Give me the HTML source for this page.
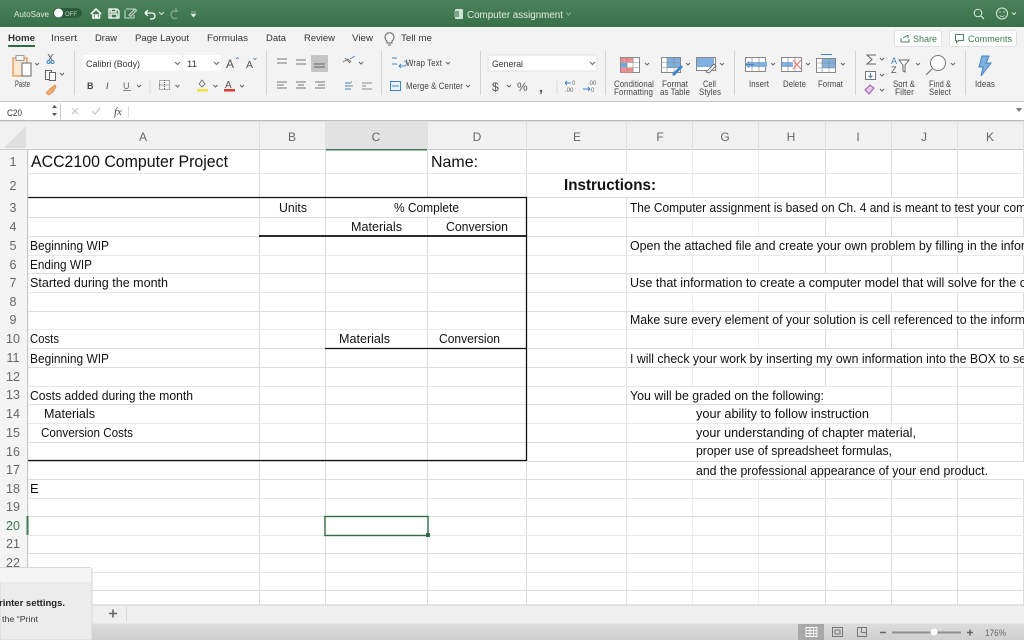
<!DOCTYPE html>
<html><head><meta charset="utf-8"><style>
html,body{margin:0;padding:0;background:#fff;width:1024px;height:640px;overflow:hidden}
svg{position:absolute;left:0;top:0;display:block}
text{font-family:"Liberation Sans",sans-serif}
.r{font-size:9px;fill:#444;letter-spacing:.1px}
.t{font-size:9.5px;fill:#333}
.c{font-size:13px;fill:#111}
.h{font-size:12px;fill:#666;text-anchor:middle}
.n{font-size:12.5px;fill:#666;text-anchor:middle}
.chev{fill:none;stroke:#666;stroke-width:1}
</style></head><body>
<svg width="1024" height="640" viewBox="0 0 1024 640" xmlns="http://www.w3.org/2000/svg">
<defs>
<linearGradient id="g" x1="0" y1="0" x2="0" y2="1"><stop offset="0" stop-color="#4c8259"/><stop offset="1" stop-color="#38714a"/></linearGradient>
<linearGradient id="s" x1="0" y1="0" x2="0" y2="1"><stop offset="0" stop-color="#dcdcdc"/><stop offset="1" stop-color="#cfcfcf"/></linearGradient>
</defs>
<rect width="1024" height="640" fill="#fff"/>

<!-- title bar -->
<rect width="1024" height="27" fill="url(#g)"/>
<text x="14" y="17" font-size="8.5" fill="#dfe9e2" textLength="35" lengthAdjust="spacingAndGlyphs">AutoSave</text>
<rect x="53" y="8" width="29" height="10" rx="5" fill="#2c5b3a"/><circle cx="58.5" cy="13" r="4.5" fill="#fff"/>
<text x="65" y="16" font-size="6" fill="#b9cfc0" textLength="12" lengthAdjust="spacingAndGlyphs">OFF</text>
<path d="M91 14l5-5 5 5M93 14v4h2.5v-3h1.5v3h2.500v-4" fill="none" stroke="#fff" stroke-width="1.6"/>
<path d="M109 9h8l2 2v7h-10zM111 9v3h5V9M111 18v-4h6v4" fill="none" stroke="#fff" stroke-width="1.3"/>
<path d="M126 9h8v2M125 10v8h9v-3M129 15l6-6 1.5 1.5-6 6z" fill="none" stroke="#c7d8cc" stroke-width="1.1"/>
<path d="M145 13h7a3 3 0 0 1 0 6h-2M145 13l3-3M145 13l3 3" fill="none" stroke="#fff" stroke-width="1.3"/>
<path d="M159 12l2.5 2.5 2.5-2.500" fill="none" stroke="#d5e2d9" stroke-width="1"/>
<path d="M178 11h-5a4 4 0 1 0 4 7M176 8v4" fill="none" stroke="#7fa68a" stroke-width="1.4"/>
<path d="M191 12h5M191 14l2.5 3 2.5-3z" fill="#dfe9e2" stroke="#dfe9e2" stroke-width=".6"/>
<rect x="455" y="9" width="8" height="10" rx="1" fill="#cfe0d4"/><rect x="454" y="11" width="5" height="6" fill="#7aa487"/>
<text x="467" y="18" font-size="10" fill="#e4ece6" textLength="96" lengthAdjust="spacingAndGlyphs">Computer assignment</text>
<path d="M566 12.5l2.5 2.5 2.5-2.500" fill="none" stroke="#8db198" stroke-width="1"/>
<circle cx="978" cy="13" r="3.8" fill="none" stroke="#dfe9e2" stroke-width="1"/><path d="M981 16l3 3" stroke="#dfe9e2" stroke-width="1.2"/>
<circle cx="1002" cy="13.5" r="5.5" fill="none" stroke="#dfe9e2" stroke-width="1"/><circle cx="1000" cy="12" r=".7" fill="#dfe9e2"/><circle cx="1004" cy="12" r=".7" fill="#dfe9e2"/><path d="M999.5 15.5q2.5 2 5 0" fill="none" stroke="#dfe9e2" stroke-width=".8"/>
<path d="M1012 12.5l2 2 2-2" fill="none" stroke="#dfe9e2" stroke-width="1"/>

<!-- ribbon -->
<rect y="27" width="1024" height="75" fill="#f3f3f3"/>
<rect y="101" width="1024" height="1.5" fill="#c8c8c8"/>
<g class="t">
<text x="8" y="41" font-weight="bold" fill="#333" textLength="27" lengthAdjust="spacingAndGlyphs">Home</text>
<text x="51" y="41" textLength="26" lengthAdjust="spacingAndGlyphs">Insert</text>
<text x="95" y="41" textLength="22" lengthAdjust="spacingAndGlyphs">Draw</text>
<text x="135" y="41" textLength="54" lengthAdjust="spacingAndGlyphs">Page Layout</text>
<text x="207" y="41" textLength="41" lengthAdjust="spacingAndGlyphs">Formulas</text>
<text x="266" y="41" textLength="20" lengthAdjust="spacingAndGlyphs">Data</text>
<text x="304" y="41" textLength="31" lengthAdjust="spacingAndGlyphs">Review</text>
<text x="352" y="41" textLength="21" lengthAdjust="spacingAndGlyphs">View</text>
<text x="401" y="41" textLength="31" lengthAdjust="spacingAndGlyphs">Tell me</text>
</g>
<rect x="8" y="45" width="27" height="2" fill="#2f6b45"/>
<path d="M387 41a4.5 4.5 0 1 1 5 0v2h-5zM388 45h3" fill="none" stroke="#666" stroke-width="1"/>

<!-- share/comments -->
<rect x="894.5" y="30.5" width="47" height="16" rx="2" fill="#fff" stroke="#e0e0e0"/>
<path d="M901 42v-4M901 42h8v-3M903 38l5-3M908 35v3" fill="none" stroke="#4f7f5d" stroke-width="1"/>
<text x="913" y="42" font-size="9" fill="#3c7a50" textLength="24" lengthAdjust="spacingAndGlyphs">Share</text>
<rect x="949.5" y="30.5" width="67" height="16" rx="2" fill="#fff" stroke="#e0e0e0"/>
<path d="M955.5 34.5h8v6h-5l-2 2v-2h-1z" fill="none" stroke="#4f7f5d" stroke-width="1"/>
<text x="968" y="42" font-size="9" fill="#3c7a50" textLength="44" lengthAdjust="spacingAndGlyphs">Comments</text>

<!-- separators -->
<g stroke="#d3d3d3"><path d="M74.5 51v44M266.5 51v44M381.5 51v44M480.5 51v44M605.5 51v44M734.5 51v44M855.5 51v44M965.5 51v44"/></g>

<!-- clipboard -->
<path d="M13 58h14v18H13z" fill="#fbe7d3" stroke="#e79a4e" stroke-width="1.3"/><rect x="16" y="55.5" width="8" height="5" fill="#f4f4f4" stroke="#888" stroke-width=".8"/>
<rect x="22" y="63" width="9" height="13" fill="#fff" stroke="#666"/>
<path d="M35 63l2 2 2-2" class="chev"/>
<text x="15" y="87" class="r" textLength="15" lengthAdjust="spacingAndGlyphs">Paste</text>
<path d="M48 54l4 6M53 54l-4 6" stroke="#666" fill="none"/><circle cx="48.5" cy="62" r="1.5" fill="none" stroke="#3e84c6"/><circle cx="52.5" cy="62" r="1.5" fill="none" stroke="#3e84c6"/>
<rect x="45.5" y="70.5" width="6" height="9" fill="none" stroke="#666"/><rect x="49.5" y="72.5" width="6" height="8" fill="#fff" stroke="#666"/>
<path d="M60 73l2 2 2-2" class="chev"/>
<path d="M46 93l5-5 3 3-5 4zM51 88l4-3 1 2-2 3" fill="#f0b27a" stroke="#d9883f" stroke-width=".8"/>

<!-- font -->
<rect x="83" y="55" width="98" height="16" rx="2" fill="#fff"/>
<text x="86" y="67" font-size="9.5" fill="#333" textLength="54" lengthAdjust="spacingAndGlyphs">Calibri (Body)</text>
<path d="M175 62l2.5 2.5 2.5-2.500" class="chev"/>
<rect x="183" y="55" width="38" height="16" rx="2" fill="#fff"/>
<text x="187" y="67" font-size="9.5" fill="#333">11</text>
<path d="M214 62l2.5 2.5 2.5-2.500" class="chev"/>
<text x="226" y="68" font-size="12" fill="#555">A</text><path d="M236 59l1.5-1.500 1.5 1.5" fill="none" stroke="#3e84c6" stroke-width=".8"/>
<text x="246" y="68" font-size="10.5" fill="#555">A</text><path d="M253.5 58l1.5 1.5 1.5-1.500" fill="none" stroke="#3e84c6" stroke-width=".8"/>
<text x="87" y="89" font-size="9" font-weight="bold" fill="#444">B</text>
<text x="106" y="89" font-size="9" font-style="italic" fill="#444">I</text>
<text x="123" y="89" font-size="9" fill="#666">U</text><path d="M123 90.5h8" stroke="#888"/>
<path d="M137 85l2 2 2-2" class="chev"/>
<path d="M150 80v14" stroke="#ddd"/>
<rect x="159.5" y="80.5" width="10" height="9" fill="none" stroke="#666" stroke-dasharray="1 1"/><path d="M159.5 85h10M164.5 80v9" stroke="#666" stroke-dasharray="1 1"/>
<path d="M175.5 85l2 2 2-2" class="chev"/>
<path d="M199 84l3-4 3 4-3 3z" fill="#eee" stroke="#666" stroke-width=".8"/><rect x="197" y="89" width="11" height="2.5" fill="#f4e33c"/>
<path d="M213.5 85l2 2 2-2" class="chev"/>
<text x="225" y="88" font-size="10" fill="#555">A</text><rect x="224" y="89" width="11" height="2.5" fill="#e23b36"/>
<path d="M240 85l2 2 2-2" class="chev"/>

<!-- align -->
<path d="M277 59h10M277 63h10M296 60h10M296 64h10" stroke="#777"/>
<rect x="311" y="55" width="17" height="17" rx="1" fill="#c4c4c4"/><path d="M314 64h11M314 67h11" stroke="#666"/>
<path d="M277 82h10M277 85h7M277 88h10M296 82h10M298 85h6M296 88h10M315 82h10M318 85h7M315 88h10" stroke="#777"/>
<path d="M345 58l5 5M343 62l5-3 3 3" fill="none" stroke="#777"/><path d="M350 59l5-3" stroke="#3e84c6"/>
<path d="M359 62l2 2 2-2" class="chev"/>
<path d="M345 83h6M345 89h6M348 86h-3" stroke="#3e84c6"/><path d="M352 82h-1M348 86h5" stroke="#888"/>
<path d="M362 83h10M362 89h10M362 86h4" stroke="#888"/><path d="M364 86h1" stroke="#3e84c6"/>

<!-- wrap -->
<path d="M392 58h5M392 64h5M399 66h5a2 2 0 0 0 0-5M399 66l2-2M399 66l2 2" fill="none" stroke="#3e84c6" stroke-width=".9"/>
<text x="406" y="66" class="r" textLength="36" lengthAdjust="spacingAndGlyphs">Wrap Text</text>
<path d="M446 62l2 2 2-2" class="chev"/>
<rect x="390.5" y="81.5" width="10" height="9" fill="#eaf2fa" stroke="#3e84c6"/><path d="M392 86h7" stroke="#3e84c6"/>
<text x="406" y="89" class="r" textLength="57" lengthAdjust="spacingAndGlyphs">Merge &amp; Center</text>
<path d="M466 85l2 2 2-2" class="chev"/>

<!-- number -->
<rect x="488" y="55" width="109" height="16" rx="2" fill="#fff" stroke="#e2e2e2"/>
<text x="492" y="67" font-size="9.5" fill="#333" textLength="31" lengthAdjust="spacingAndGlyphs">General</text>
<path d="M590 62l2.5 2.5 2.5-2.500" class="chev"/>
<text x="492" y="91" font-size="12" fill="#555">$</text>
<path d="M507 85l2 2 2-2" class="chev"/>
<text x="517" y="91" font-size="12" fill="#555">%</text>
<text x="539" y="92" font-size="14" font-weight="bold" fill="#555">,</text>
<path d="M557 80v14" stroke="#ddd"/>
<path d="M565 83h6M565 83l2-2M565 83l2 2" fill="none" stroke="#3e84c6" stroke-width=".9"/><text x="565" y="92" font-size="6" fill="#666">.00</text><text x="572" y="85" font-size="6" fill="#666">0</text>
<path d="M583 89h7M590 89l-2-2M590 89l-2 2" fill="none" stroke="#3e84c6" stroke-width=".9"/><text x="588" y="85" font-size="6" fill="#666">.00</text><text x="591" y="92" font-size="6" fill="#666">0</text>

<!-- conditional formatting -->
<rect x="620.5" y="57.5" width="19" height="15" fill="#fff" stroke="#888"/>
<rect x="621" y="58" width="12" height="4.5" fill="#ef8f8f"/><rect x="621" y="63" width="6" height="4.5" fill="#6ea9dd"/><rect x="621" y="68" width="12" height="4.5" fill="#ef8f8f"/>
<path d="M627 58v14M633 58v14M621 62.5h18M621 67.5h18" stroke="#888" stroke-width=".6"/>
<path d="M645 63l2 2 2-2" class="chev"/>
<text x="614" y="87" class="r" textLength="40" lengthAdjust="spacingAndGlyphs">Conditional</text>
<text x="614" y="95" class="r" textLength="39" lengthAdjust="spacingAndGlyphs">Formatting</text>
<!-- format table -->
<rect x="661.5" y="57.5" width="19" height="15" fill="#fff" stroke="#888"/><rect x="667" y="58" width="13" height="10" fill="#7fb0e0"/><path d="M667 58v14M674 58v14M662 62.5h18M662 67.5h18" stroke="#888" stroke-width=".6"/>
<path d="M672 74l9-9 2 2-9 9z" fill="#3e84c6"/>
<path d="M686 63l2 2 2-2" class="chev"/>
<text x="662" y="87" class="r" textLength="26" lengthAdjust="spacingAndGlyphs">Format</text>
<text x="660" y="95" class="r" textLength="30" lengthAdjust="spacingAndGlyphs">as Table</text>
<!-- cell styles -->
<rect x="696.5" y="57.5" width="19" height="13" fill="#fff" stroke="#888"/><rect x="697" y="58" width="17" height="9" fill="#7fb0e0"/>
<path d="M706 72l8-8 2 2-7 7z" fill="#eee" stroke="#666" stroke-width=".8"/>
<path d="M720 63l2 2 2-2" class="chev"/>
<text x="703" y="87" class="r" textLength="13" lengthAdjust="spacingAndGlyphs">Cell</text>
<text x="699" y="95" class="r" textLength="22" lengthAdjust="spacingAndGlyphs">Styles</text>

<!-- insert / delete / format -->
<rect x="745.5" y="57.5" width="20" height="14" fill="#fff" stroke="#888"/><rect x="748" y="62" width="19" height="5" fill="#7fb0e0"/><path d="M752 58v14M759 58v14" stroke="#888" stroke-width=".7"/><path d="M746 64.5h8M746 64.5l3-3M746 64.5l3 3" fill="none" stroke="#3e84c6"/>
<path d="M771 63l2 2 2-2" class="chev"/>
<text x="749" y="87" class="r" textLength="20" lengthAdjust="spacingAndGlyphs">Insert</text>
<rect x="781.5" y="57.5" width="20" height="14" fill="#fff" stroke="#888"/><rect x="782" y="62" width="11" height="5" fill="#7fb0e0"/><path d="M788 58v14M795 58v14" stroke="#888" stroke-width=".7"/><path d="M793 60l8 9M801 60l-8 9" stroke="#e77" stroke-width="1.2"/>
<path d="M806 63l2 2 2-2" class="chev"/>
<text x="783" y="87" class="r" textLength="23" lengthAdjust="spacingAndGlyphs">Delete</text>
<rect x="816.5" y="58.5" width="19" height="14" fill="#fff" stroke="#888"/><rect x="822" y="59" width="13" height="9" fill="#7fb0e0"/><path d="M822 58v14M829 58v14M817 63h18M817 68h18" stroke="#888" stroke-width=".6"/><path d="M821 54.5h11" stroke="#3e84c6"/>
<path d="M841 63l2 2 2-2" class="chev"/>
<text x="818" y="87" class="r" textLength="25" lengthAdjust="spacingAndGlyphs">Format</text>

<!-- editing -->
<path d="M876 55h-9l5 4.5-5 4.5h9" fill="none" stroke="#666"/><path d="M880 58l2 2 2-2" class="chev"/>
<rect x="865.5" y="71.5" width="10" height="8" fill="#fff" stroke="#777"/><path d="M870.5 73v4M868.5 75.5l2 2 2-2" fill="none" stroke="#3e84c6"/><path d="M880 74l2 2 2-2" class="chev"/>
<path d="M865 90l5-5 4 3-5 6z" fill="#e6c8ee" stroke="#9a5fb4"/><path d="M880 89l2 2 2-2" class="chev"/>
<text x="891" y="64" font-size="9" fill="#3e84c6">A</text><text x="891" y="73" font-size="9" fill="#555">Z</text>
<path d="M899 60h10l-4 5v7l-2-1v-6z" fill="#fff" stroke="#666"/>
<path d="M916 63l2 2 2-2" class="chev"/>
<text x="893" y="87" class="r" textLength="22" lengthAdjust="spacingAndGlyphs">Sort &amp;</text>
<text x="895" y="95" class="r" textLength="19" lengthAdjust="spacingAndGlyphs">Filter</text>
<circle cx="938" cy="63" r="7.5" fill="#fff" stroke="#777"/><path d="M932 69l-6 6" stroke="#777" stroke-width="1.2"/>
<path d="M951 63l2 2 2-2" class="chev"/>
<text x="929" y="87" class="r" textLength="22" lengthAdjust="spacingAndGlyphs">Find &amp;</text>
<text x="929" y="95" class="r" textLength="22" lengthAdjust="spacingAndGlyphs">Select</text>
<path d="M982 56h7l-3 7h5l-10 13 2-9h-4z" fill="#7fb0e0" stroke="#3e84c6"/>
<text x="975" y="87" class="r" textLength="20" lengthAdjust="spacingAndGlyphs">Ideas</text>

<!-- formula bar -->
<rect y="102" width="1024" height="19" fill="#fff"/>
<rect y="120" width="1024" height="1.5" fill="#bdbdbd"/>
<path d="M60.5 103v17" stroke="#ccc"/>
<text x="7" y="116" font-size="9" fill="#333" textLength="15" lengthAdjust="spacingAndGlyphs">C20</text>
<path d="M52 108l2.5-3 2.5 3zM52 113l2.5 3 2.5-3z" fill="#555"/>
<path d="M72 108l6 6M78 108l-6 6M92 111l3 3 5-6" fill="none" stroke="#c4c4c4" stroke-width="1.2"/>
<text x="114" y="115" font-size="11" font-style="italic" style="font-family:'Liberation Serif',serif" fill="#444">fx</text>
<path d="M128.5 106v11" stroke="#ddd"/>
<path d="M1016 108h6l-3 4z" fill="#777"/>

<!-- headers -->
<rect y="122" width="1024" height="28" fill="#f1f1f1"/>
<rect x="325" y="122" width="103" height="27" fill="#e2e2e2"/>
<rect y="149" width="1024" height="1" fill="#c9c9c9"/>
<rect x="325" y="149" width="103" height="1.5" fill="#3c7a50"/>
<path d="M4 148L26 126v22z" fill="#dedede"/>
<g stroke="#e0e0e0"><path d="M259.5 122v28M325.5 122v28M427.5 122v28M526.5 122v28M626.5 122v28M692.5 122v28M758.5 122v28M825.5 122v28M891.5 122v28M957.5 122v28M1023.5 122v28"/></g>
<text class="h" x="143" y="141">A</text><text class="h" x="292" y="141">B</text><text class="h" x="376" y="141">C</text><text class="h" x="477" y="141">D</text><text class="h" x="577" y="141">E</text><text class="h" x="660" y="141">F</text><text class="h" x="725" y="141">G</text><text class="h" x="791" y="141">H</text><text class="h" x="858" y="141">I</text><text class="h" x="924" y="141">J</text><text class="h" x="990" y="141">K</text>

<!-- row header -->
<rect y="150" width="28" height="455" fill="#f4f4f4"/>
<g class="n">
<text x="13" y="166">1</text><text x="13" y="190">2</text><text x="13" y="212">3</text><text x="13" y="231">4</text><text x="13" y="250">5</text><text x="13" y="269">6</text><text x="13" y="287">7</text><text x="13" y="306">8</text><text x="13" y="324">9</text><text x="13" y="343">10</text><text x="13" y="362">11</text><text x="13" y="381">12</text><text x="13" y="399">13</text><text x="13" y="418">14</text><text x="13" y="437">15</text><text x="13" y="456">16</text><text x="13" y="474">17</text><text x="13" y="493">18</text><text x="13" y="511">19</text><text x="13" y="530" style="fill:#3c7a50">20</text><text x="13" y="548">21</text><text x="13" y="567">22</text>
</g>

<!-- gridlines -->
<g stroke="#dcdcdc" stroke-width="1">
<path d="M259.5 150v455M325.5 150v455M427.5 150v455M526.5 150v455M825.5 150v455M891.5 150v455M957.5 150v455M1023.5 150v455"/>
<path d="M626.5 150v455" stroke="#e2e2e2"/>
<path d="M692.5 150v455M758.5 150v455" stroke="#eeeeee"/>
<path d="M28 197.5H1024M28 217.5H1024M28 236.5H1024M28 273.5H1024M28 311.5H1024M28 348.5H1024M28 367.5H1024M28 404.5H1024M28 442.5H1024M28 461.5H1024M28 479.5H1024M28 516.5H1024M28 553.5H1024M28 590.5H1024"/>
<path d="M28 173.5H1024M28 255.5H1024M28 292.5H1024M28 329.5H1024M28 386.5H1024M28 423.5H1024M28 498.5H1024M28 535.5H1024M28 572.5H1024" stroke="#e8e8e8"/>
</g>
<!-- overflow cover -->
<g fill="#fff">
<rect x="528" y="174" width="130" height="23"/>
<rect x="327" y="198" width="199" height="19"/>
<rect x="628" y="198" width="396" height="19"/>
<rect x="628" y="237" width="396" height="18"/>
<rect x="628" y="274" width="396" height="18"/>
<rect x="628" y="312" width="396" height="17"/>
<rect x="628" y="349" width="396" height="18"/>
<rect x="628" y="387" width="263" height="17"/>
<rect x="628" y="405" width="263" height="18"/>
<rect x="628" y="424" width="329" height="18"/>
<rect x="628" y="443" width="329" height="18"/>
<rect x="628" y="462" width="396" height="17"/>
</g>

<!-- borders -->
<g stroke="#111" fill="none">
<path d="M28 197.5H526.5V461M28 460.5H526.5" stroke-width="1.3"/>
<path d="M259 236H526" stroke-width="1.7"/>
<path d="M325 348.5H526" stroke-width="1.2"/>
</g>
<rect x="27" y="150" width="1.2" height="455" fill="#c9c9c9"/>
<rect x="26.5" y="516" width="2" height="19" fill="#3c7a50"/>

<!-- cell text -->
<text x="31" y="167" font-size="16.5" fill="#111" textLength="197" lengthAdjust="spacingAndGlyphs">ACC2100 Computer Project</text>
<text x="431" y="167" font-size="16" fill="#111" textLength="47" lengthAdjust="spacingAndGlyphs">Name:</text>
<text x="564" y="190" font-size="16" font-weight="bold" fill="#111" textLength="92" lengthAdjust="spacingAndGlyphs">Instructions:</text>
<g class="c">
<text x="279" y="212" textLength="28" lengthAdjust="spacingAndGlyphs">Units</text>
<text x="394" y="212" textLength="65" lengthAdjust="spacingAndGlyphs">% Complete</text>
<text x="351" y="231" textLength="51" lengthAdjust="spacingAndGlyphs">Materials</text>
<text x="446" y="231" textLength="62" lengthAdjust="spacingAndGlyphs">Conversion</text>
<text x="30" y="250" textLength="79" lengthAdjust="spacingAndGlyphs">Beginning WIP</text>
<text x="30" y="269" textLength="62" lengthAdjust="spacingAndGlyphs">Ending WIP</text>
<text x="30" y="287" textLength="138" lengthAdjust="spacingAndGlyphs">Started during the month</text>
<text x="30" y="343" textLength="29" lengthAdjust="spacingAndGlyphs">Costs</text>
<text x="339" y="343" textLength="51" lengthAdjust="spacingAndGlyphs">Materials</text>
<text x="439" y="343" textLength="61" lengthAdjust="spacingAndGlyphs">Conversion</text>
<text x="30" y="363" textLength="79" lengthAdjust="spacingAndGlyphs">Beginning WIP</text>
<text x="30" y="400" textLength="163" lengthAdjust="spacingAndGlyphs">Costs added during the month</text>
<text x="44" y="418" textLength="51" lengthAdjust="spacingAndGlyphs">Materials</text>
<text x="41" y="437" textLength="92" lengthAdjust="spacingAndGlyphs">Conversion Costs</text>
<text x="30" y="493">E</text>
<text x="630" y="212" textLength="396" lengthAdjust="spacingAndGlyphs">The Computer assignment is based on Ch. 4 and is meant to test your com</text>
<text x="630" y="250" textLength="395" lengthAdjust="spacingAndGlyphs">Open the attached file and create your own problem by filling in the infor</text>
<text x="630" y="287" textLength="396" lengthAdjust="spacingAndGlyphs">Use that information to create  a computer model that will solve for the c</text>
<text x="630" y="324" textLength="395" lengthAdjust="spacingAndGlyphs">Make sure every element of your solution is cell referenced to the inform</text>
<text x="630" y="363" textLength="396" lengthAdjust="spacingAndGlyphs">I will check your work by inserting my own information into the BOX to se</text>
<text x="630" y="400" textLength="194" lengthAdjust="spacingAndGlyphs">You will be graded on the following:</text>
<text x="696" y="418" textLength="173" lengthAdjust="spacingAndGlyphs">your ability to follow instruction</text>
<text x="696" y="437" textLength="220" lengthAdjust="spacingAndGlyphs">your understanding of  chapter material,</text>
<text x="696" y="455" textLength="196" lengthAdjust="spacingAndGlyphs">proper use of spreadsheet formulas,</text>
<text x="696" y="475" textLength="292" lengthAdjust="spacingAndGlyphs">and the professional appearance of your end product.</text>
</g>

<!-- selection -->
<rect x="325" y="516.500" width="103" height="19" fill="#fff" stroke="#2f6b45" stroke-width="1.4"/>
<rect x="426" y="533" width="4" height="4" fill="#2f6b45"/>

<!-- tab bar & status -->
<rect y="605" width="1024" height="19" fill="#efefef"/>
<rect y="604.5" width="1024" height="1" fill="#cfcfcf"/>
<rect y="623.5" width="1024" height="16.5" fill="url(#s)"/>
<path d="M126.5 606v15" stroke="#d5d5d5"/>
<path d="M109 613.5h8M113 609.5v8" stroke="#666" stroke-width="1.6"/>

<rect x="798" y="624" width="26" height="16" fill="#a9a9a9"/>
<path d="M806 627.5h11v9h-11zM806 630.5h11M806 633.5h11M810 627.5v9M813.5 627.5v9" fill="none" stroke="#fff" stroke-width=".9"/>
<rect x="832.5" y="627.500" width="10" height="9" fill="none" stroke="#777"/><rect x="835" y="630" width="5" height="4" fill="none" stroke="#777"/>
<rect x="857.5" y="627.500" width="9" height="9" fill="none" stroke="#777"/><path d="M861.5 627.5v5h5" fill="none" stroke="#777"/>
<path d="M880 632.5h6" stroke="#666" stroke-width="1.5"/>
<rect x="892" y="631.5" width="69" height="2" fill="#8f8f8f"/>
<circle cx="934" cy="632" r="3.5" fill="#fff"/>
<path d="M967 632.5h6M970 629.5v6" stroke="#666" stroke-width="1.5"/>
<text x="985" y="636" font-size="9" fill="#666" textLength="21" lengthAdjust="spacingAndGlyphs">176%</text>

<!-- popup -->
<path d="M0 567.5H89a3 3 0 0 1 3 3V640H0z" fill="#ececec" stroke="#d6d6d6"/>
<rect x="0" y="568" width="91" height="14" fill="#f5f5f5"/>
<text x="-1" y="606" font-size="9" font-weight="bold" fill="#222" textLength="66" lengthAdjust="spacingAndGlyphs">rinter settings.</text>
<text x="2" y="622" font-size="8" fill="#333" textLength="36" lengthAdjust="spacingAndGlyphs">the “Print</text>
</svg>
</body></html>
